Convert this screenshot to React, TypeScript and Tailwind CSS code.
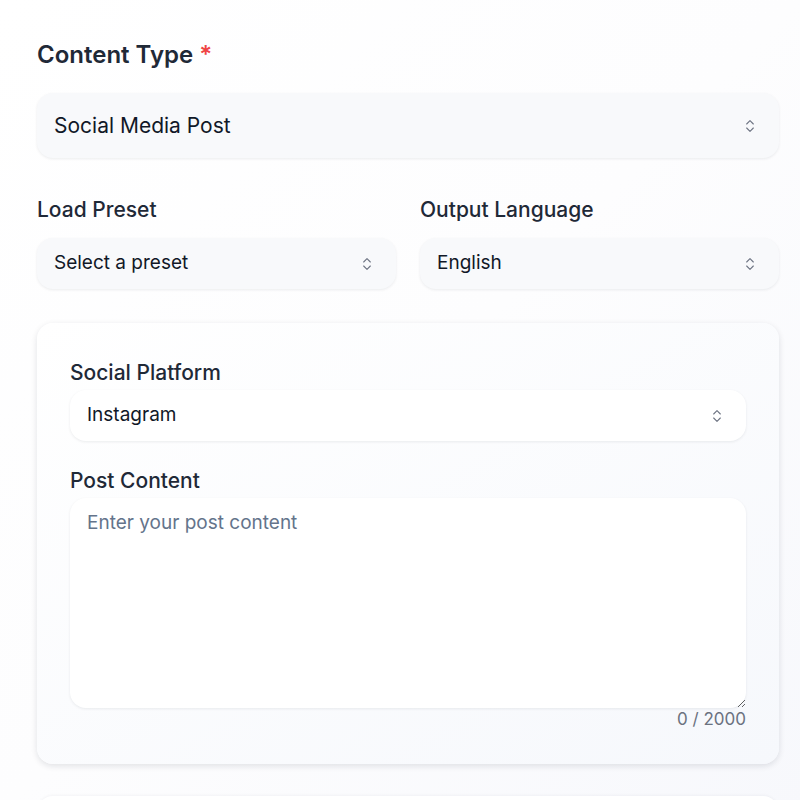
import { ChevronsUpDown } from "lucide-react";

type SelectProps = {
  value: string;
  size?: "lg" | "md";
  tone?: "gray" | "white";
};

function FakeSelect({ value, size = "md", tone = "gray" }: SelectProps) {
  return (
    <button
      type="button"
      className={[
        "flex w-full items-center justify-between rounded-2xl px-[17px] text-left text-[#111827] shadow-[0_1px_3px_rgba(15,23,42,0.08)]",
        size === "lg" ? "h-[65px] text-[21px]" : "h-[51px] text-[19px]",
        tone === "white" ? "h-[50px] bg-white" : "bg-[#f8f9fb]",
      ].join(" ")}
    >
      <span>{value}</span>
      <ChevronsUpDown size={16} strokeWidth={1.6} className="mr-[4px] text-[#6b7280]" />
    </button>
  );
}

export default function App() {
  return (
    <div
      className="min-h-[800px] bg-gradient-to-br from-white via-[#fdfdfe] to-[#f7f8fc] px-[37px] pt-[39px]"
      style={{ fontFamily: "Inter, 'Noto Sans', sans-serif" }}
    >
      <div className="w-[742px]">
        {/* Content type */}
        <label className="block text-[24px] leading-[32px] font-semibold text-[#1f2937]">
          Content Type <span className="text-[#ef4444]">*</span>
        </label>
        <div className="mt-[22px]">
          <FakeSelect value="Social Media Post" size="lg" />
        </div>

        {/* Preset + language */}
        <div className="mt-[38px] grid grid-cols-2 gap-6">
          <div>
            <label className="block text-[21px] leading-[28px] font-medium text-[#1f2937]">Load Preset</label>
            <div className="mt-[14px]">
              <FakeSelect value="Select a preset" />
            </div>
          </div>
          <div>
            <label className="block text-[21px] leading-[28px] font-medium text-[#1f2937]">Output Language</label>
            <div className="mt-[14px]">
              <FakeSelect value="English" />
            </div>
          </div>
        </div>

        {/* Platform card */}
        <div className="mt-[34px] rounded-2xl bg-gradient-to-br from-white to-[#f6f8fc] px-[33px] pb-[35px] pt-[36px] shadow-[0_2px_6px_rgba(15,23,42,0.12)]">
          <label className="block text-[21px] leading-[28px] font-medium text-[#1f2937]">Social Platform</label>
          <div className="mt-[3px]">
            <FakeSelect value="Instagram" tone="white" />
          </div>

          <label className="mt-[26px] block text-[21px] leading-[28px] font-medium text-[#1f2937]">Post Content</label>
          <textarea
            placeholder="Enter your post content"
            className="mt-[3px] block h-[210px] w-full resize-y rounded-2xl bg-white px-[17px] pt-[11px] text-[19px] leading-[28px] text-[#111827] shadow-[0_1px_3px_rgba(15,23,42,0.08)] outline-none placeholder:text-[#64748b]"
          />
          <div className="mt-[1px] text-right text-[17px] leading-[20px] text-[#6b7280]">0 / 2000</div>
        </div>

        <div className="mt-[32px] h-[20px] rounded-t-2xl bg-white shadow-[0_-1px_3px_rgba(15,23,42,0.04)]" />
      </div>
    </div>
  );
}
